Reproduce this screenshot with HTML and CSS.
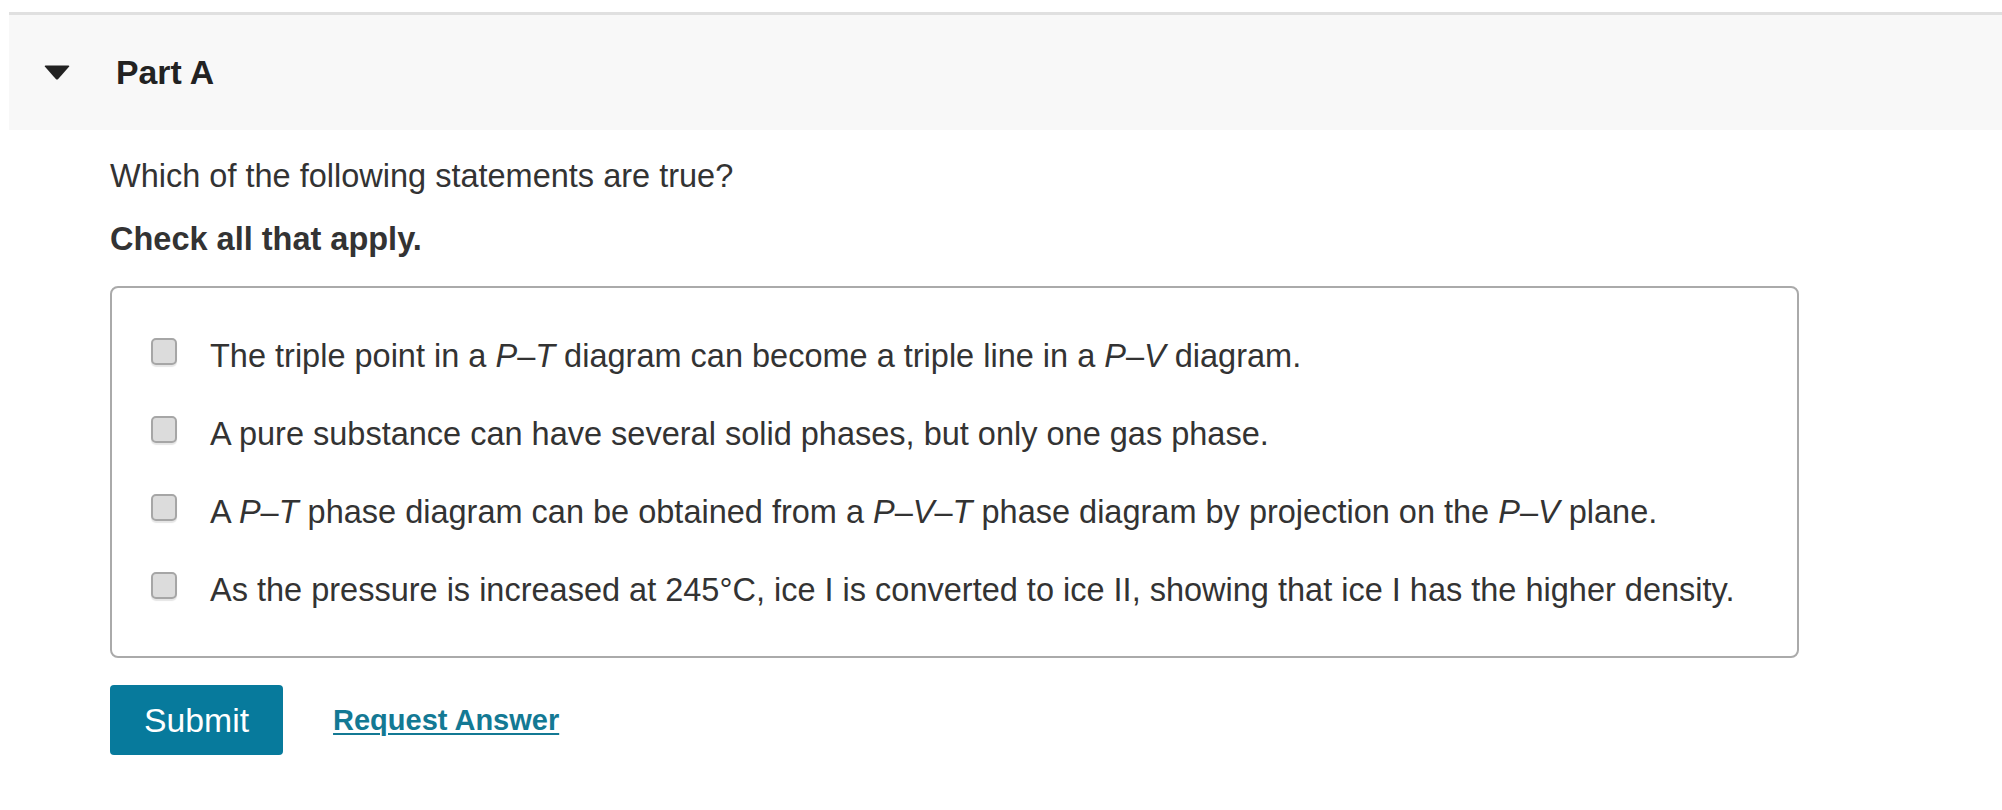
FILE: index.html
```html
<!DOCTYPE html>
<html lang="en">
<head>
  <meta charset="UTF-8" />
  <meta name="viewport" content="width=device-width, initial-scale=1" />
  <link rel="stylesheet" href="styles.css">
</head>
<body>

  <div class="part">
    <div class="part-header">
      <svg class="caret" width="26" height="15" viewBox="0 0 26 15">
        <path d="M1.5 0.5 H24.5 Q26 0.5 25 1.8 L14.2 14 Q13 15.2 11.8 14 L1 1.8 Q0 0.5 1.5 0.5 Z" fill="#222" />
      </svg>
      <h2>Part A</h2>
    </div>

    <div class="part-body">
      <p class="question">Which of the following statements are true?</p>
      <p class="instruction">Check all that apply.</p>

      <div class="choices">
        <label class="choice">
          <input type="checkbox" name="answer" value="a" />
          <span>The triple point in a <i>P</i>–<i>T</i> diagram can become a triple line in a <i>P</i>–<i>V</i> diagram.</span>
        </label>
        <label class="choice">
          <input type="checkbox" name="answer" value="b" />
          <span>A pure substance can have several solid phases, but only one gas phase.</span>
        </label>
        <label class="choice">
          <input type="checkbox" name="answer" value="c" />
          <span>A <i>P</i>–<i>T</i> phase diagram can be obtained from a <i>P</i>–<i>V</i>–<i>T</i> phase diagram by projection on the <i>P</i>–<i>V</i> plane.</span>
        </label>
        <label class="choice">
          <input type="checkbox" name="answer" value="d" />
          <span>As the pressure is increased at 245°C, ice I is converted to ice II, showing that ice I has the higher density.</span>
        </label>
      </div>

      <div class="actions">
        <button type="button">Submit</button>
        <a href="#" class="request">Request Answer</a>
      </div>
    </div>
  </div>

</body>
</html>
```

FILE: styles.css
```css
body {
  margin: 0;
  font-family: "Liberation Sans", Arial, sans-serif;
  color: #333;
  background-color: white;
}

.part {
  margin: 12px 0 0 9px;
  border-top: 3px solid #e0e0e0;
}

.part-header {
  display: flex;
  align-items: center;
  height: 115px;
  padding-left: 35px;
  background-color: #f8f8f8;
}

.caret {
  display: block;
}

.part-header h2 {
  margin: 0 0 0 46px;
  font-size: 33.75px;
  font-weight: bold;
  color: #222;
}

.part-body {
  padding: 26px 0 40px 101px;
}

.question,
.instruction {
  margin: 0;
  font-size: 32.5px;
  line-height: 40px;
}

.instruction {
  margin-top: 23px;
  font-weight: bold;
}

.choices {
  width: 1689px;
  margin-top: 27px;
  padding: 48px 0 46px 39px;
  box-sizing: border-box;
  border: 2px solid #aaa;
  border-radius: 8px;
  display: flex;
  flex-direction: column;
  gap: 38px;
}

.choice {
  display: flex;
  align-items: flex-start;
  font-size: 32.5px;
  line-height: 40px;
}

.choice input {
  appearance: none;
  -webkit-appearance: none;
  flex: none;
  width: 26px;
  height: 27px;
  margin: 2px 33px 0 0;
  box-sizing: border-box;
  border: 2px solid #a6a6a6;
  border-radius: 5px;
  background-color: #dcdcdc;
  box-shadow: 0 2px 1px rgba(0,0,0,0.1);
}

.choice i {
  font-style: italic;
}

.actions {
  display: flex;
  align-items: center;
  margin-top: 27px;
}

button {
  height: 70px;
  padding: 0 34px;
  border: none;
  border-radius: 4px;
  background-color: #077a9c;
  color: white;
  font-family: "Liberation Sans", Arial, sans-serif;
  font-size: 33.75px;
  cursor: pointer;
}

.request {
  margin-left: 50px;
  font-size: 29px;
  font-weight: bold;
  color: #137994;
  text-decoration: underline;
  text-decoration-thickness: 2px;
  text-underline-offset: 3px;
}
```
